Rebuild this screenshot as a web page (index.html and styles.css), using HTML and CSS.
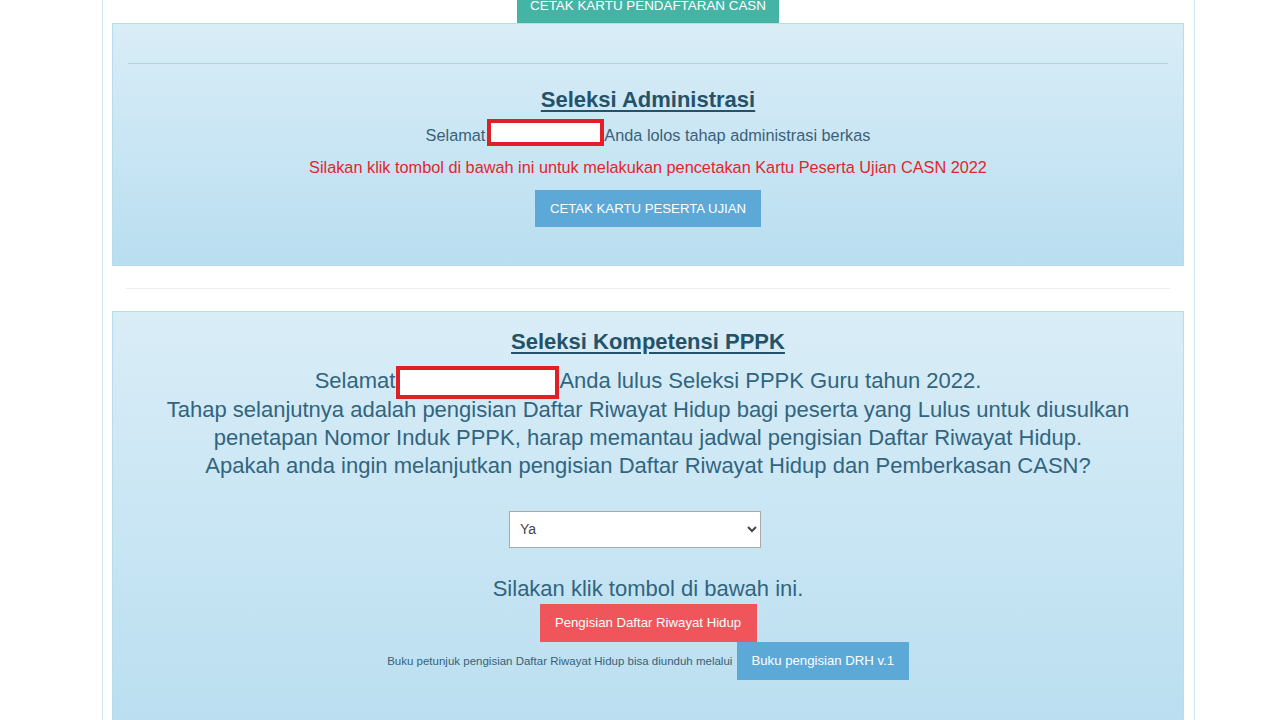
FILE: index.html
```html
<!DOCTYPE html>
<html lang="id">
<head>
<meta charset="utf-8">
<title>Seleksi CASN</title>
<link rel="stylesheet" href="styles.css">
</head>
<body>
<div class="page">
  <div class="top-row">
    <a class="btn btn-teal">CETAK KARTU PENDAFTARAN CASN</a>
  </div>

  <div class="alert alert-info first">
    <hr class="alert-hr">
    <h3 class="title">Seleksi Administrasi</h3>
    <p class="line">Selamat<span class="redact redact-sm"></span>Anda lolos tahap administrasi berkas</p>
    <p class="line warn">Silakan klik tombol di bawah ini untuk melakukan pencetakan Kartu Peserta Ujian CASN 2022</p>
    <div class="btn-row"><a class="btn btn-blue btn-print">CETAK KARTU PESERTA UJIAN</a></div>
  </div>

  <hr class="sep">

  <div class="alert alert-info second">
    <h3 class="title">Seleksi Kompetensi PPPK</h3>
    <p class="big">Selamat<span class="redact redact-lg"></span>Anda lulus Seleksi PPPK Guru tahun 2022.<br>Tahap selanjutnya adalah pengisian Daftar Riwayat Hidup bagi peserta yang Lulus untuk diusulkan<br>penetapan Nomor Induk PPPK, harap memantau jadwal pengisian Daftar Riwayat Hidup.<br>Apakah anda ingin melanjutkan pengisian Daftar Riwayat Hidup dan Pemberkasan CASN?</p>
    <div class="select-row">
      <select class="choice">
        <option>Ya</option>
        <option>Tidak</option>
      </select>
    </div>
    <p class="big click">Silakan klik tombol di bawah ini.</p>
    <div class="btn-row"><a class="btn btn-red">Pengisian Daftar Riwayat Hidup</a></div>
    <div class="guide"><span class="guide-text">Buku petunjuk pengisian Daftar Riwayat Hidup bisa diunduh melalui</span> <a class="btn btn-blue btn-drh">Buku pengisian DRH v.1</a></div>
  </div>
</div>
</body>
</html>
```

FILE: styles.css
```css
* { box-sizing: border-box; }

html, body {
  margin: 0;
  padding: 0;
  background: #ffffff;
  height: 720px;
  overflow: hidden;
}

body {
  font-family: "Liberation Sans", Arial, sans-serif;
  color: #31708f;
}

.page {
  margin: -15px 0 0 102px;
  width: 1093px;
  padding: 0 10px 0 9px;
  border-left: 1px solid #cde6f1;
  border-right: 1px solid #cde6f1;
  min-height: 800px;
}

.top-row {
  text-align: center;
  height: 38px;
}

.btn {
  display: inline-block;
  height: 38px;
  line-height: 38px;
  font-size: 13.2px;
  color: #ffffff;
  text-decoration: none;
  white-space: nowrap;
  vertical-align: top;
}

.btn-teal {
  background: #45b4a5;
  width: 262px;
  text-align: center;
  font-size: 13.4px;
  line-height: 42px;
}

.btn-blue {
  background: #5ca9d8;
}

.btn-red {
  background: #f0555b;
  width: 217px;
  text-align: center;
}

.btn-print {
  width: 226px;
  height: 37px;
  line-height: 37px;
  text-align: center;
}

.btn-drh {
  width: 172px;
  text-align: center;
}

.alert {
  border: 1px solid #b7dcec;
  background: linear-gradient(to bottom, #d9edf7 0%, #b9def0 100%);
  text-align: center;
}

.first {
  height: 243px;
  padding: 39px 15px 0;
}

.alert-hr {
  margin: 0;
  border: 0;
  border-top: 1px solid #a6d6e8;
}

.title {
  margin: 20px 0 0;
  font-size: 22px;
  line-height: 32px;
  font-weight: bold;
  color: #245269;
  text-decoration: underline;
  text-underline-offset: 3px;
}

.line {
  margin: 0;
  font-size: 16.3px;
  line-height: 32px;
  color: #3a6178;
}

.first .title + .line {
  margin-top: 3px;
}

.warn {
  color: #e2262d;
}

.btn-row {
  margin-top: 7px;
}

.redact {
  display: inline-block;
  background: #ffffff;
  border: 4px solid #e11f26;
}

.redact-sm {
  width: 117px;
  height: 27px;
  vertical-align: top;
  margin-left: 2px;
}

.redact-lg {
  width: 163px;
  height: 33px;
  vertical-align: middle;
  margin: -3px 0 -3px 1px;
}

.sep {
  margin: 22px 14px 22px;
  border: 0;
  border-top: 1px solid #eeeeee;
}

.second {
  padding: 14px 15px 60px;
}

.second .title {
  margin-top: 0;
}

.big {
  margin: 9px 0 0;
  font-size: 22px;
  line-height: 28px;
  color: #31657f;
}

.select-row {
  margin-top: 31px;
  padding-right: 26px;
}

.choice {
  width: 252px;
  height: 37px;
  border: 1px solid #a9a9a9;
  border-radius: 0;
  background: #ffffff;
  padding: 0 6px;
  font-family: "Liberation Sans", Arial, sans-serif;
  font-size: 14px;
  color: #444;
}

.click {
  margin-top: 25px;
  line-height: 32px;
}

.second .btn-row {
  margin-top: -1px;
}

.guide {
  height: 38px;
}

.guide-text {
  font-size: 11.5px;
  line-height: 38px;
  color: #3a6178;
}
```
